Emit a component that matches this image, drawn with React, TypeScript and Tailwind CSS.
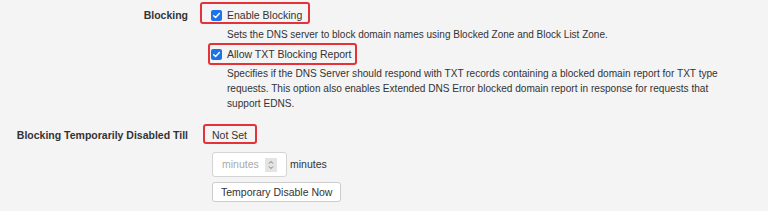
import React from "react";

function Check() {
  return (
    <span className="inline-flex h-[11px] w-[11px] shrink-0 items-center justify-center rounded-[2px] bg-[#1a73e8]">
      <svg viewBox="0 0 12 12" className="h-[9px] w-[9px]" fill="none">
        <path d="M2.2 6.2 L4.8 8.7 L9.8 3.2" stroke="white" strokeWidth="1.9" strokeLinecap="round" strokeLinejoin="round" />
      </svg>
    </span>
  );
}

function Mark({ className }: { className: string }) {
  return <span className={"pointer-events-none absolute rounded-[3px] border-2 border-[#e53238] " + className} />;
}

export default function App() {
  return (
    <div className="h-[211px] w-[768px] overflow-hidden bg-[#f4f4f4] text-[10.5px] leading-[15px] text-[#333]" style={{ fontFamily: '"Liberation Sans", Arial, sans-serif' }}>
      <div className="grid grid-cols-[188px_1fr] gap-x-[23px] pt-[8px]">
        <div className="text-right font-bold">Blocking</div>
        <div className="flex flex-col">
          <div className="flex">
            <label className="relative flex items-center gap-[5px]">
              <Check />
              <span>Enable Blocking</span>
              <Mark className="-left-[11px] -right-[8px] -top-[6px] -bottom-[1px]" />
            </label>
          </div>
          <div className="mt-[4px] pl-[16px] text-[10px]">Sets the DNS server to block domain names using Blocked Zone and Block List Zone.</div>
          <div className="mt-[5px] flex">
            <label className="relative flex items-center gap-[5px]">
              <Check />
              <span>Allow TXT Blocking Report</span>
              <Mark className="-left-[3px] -right-[5px] -top-[4px] -bottom-[3px]" />
            </label>
          </div>
          <div className="mt-[4px] w-[545px] pl-[16px] text-[10.1px]">
            Specifies if the DNS Server should respond with TXT records containing a blocked domain report for TXT type requests. This option also enables Extended DNS Error blocked domain report in response for requests that
            <br />
            support EDNS.
          </div>
        </div>

        <div className="mt-[17px] text-right font-bold">Blocking Temporarily Disabled Till</div>
        <div className="mt-[17px] flex flex-col items-start">
          <div className="relative pl-[1px]">
            <span>Not Set</span>
            <Mark className="-left-[8px] -right-[10px] -top-[4px] -bottom-[1px]" />
          </div>
          <div className="mt-[9px] flex items-center gap-[3px] pl-[1px]">
            <div className="flex h-[25px] w-[75px] items-center justify-between rounded-[3px] border border-[#d4d4d4] bg-white pl-[9px] pr-[9px]">
              <span className="text-[#aaa]">minutes</span>
              <span className="flex h-[14px] w-[12px] flex-col items-center justify-center rounded-[1px] bg-[#e4e4e4]">
                <svg viewBox="0 0 8 10" className="h-[10px] w-[8px]" fill="none" stroke="#777" strokeWidth="1">
                  <path d="M2 3.5 L4 1.5 L6 3.5" />
                  <path d="M2 6.5 L4 8.5 L6 6.5" />
                </svg>
              </span>
            </div>
            <span>minutes</span>
          </div>
          <button className="mt-[5px] ml-[1px] h-[20px] rounded-[3px] border border-[#ccc] bg-white px-[8px] text-[10.5px] leading-[15px] text-[#333]">
            Temporary Disable Now
          </button>
        </div>
      </div>
    </div>
  );
}
